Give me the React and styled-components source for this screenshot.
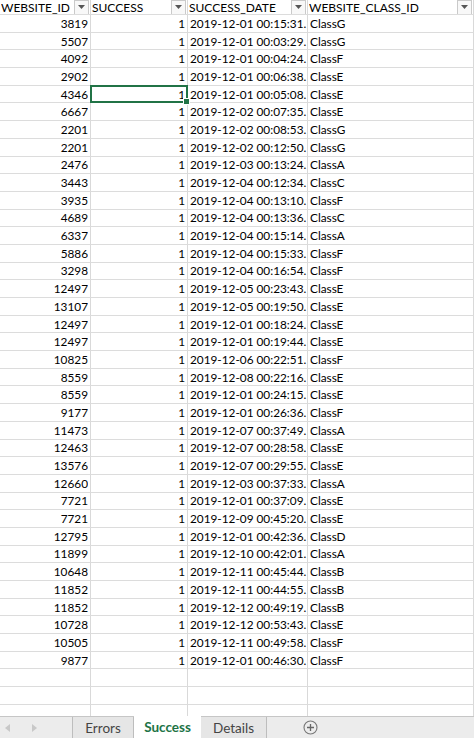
import styled, { createGlobalStyle } from "styled-components";

const GlobalStyle = createGlobalStyle`
  html, body {
    margin: 0;
    padding: 0;
    background: #ffffff;
    overflow: hidden;
  }
  body {
    font-family: Lato, "Liberation Sans", Arial, sans-serif;
  }
`;

const rows = [
  [3819, "2019-12-01 00:15:31", "ClassG"],
  [5507, "2019-12-01 00:03:29", "ClassG"],
  [4092, "2019-12-01 00:04:24", "ClassF"],
  [2902, "2019-12-01 00:06:38", "ClassE"],
  [4346, "2019-12-01 00:05:08", "ClassE"],
  [6667, "2019-12-02 00:07:35", "ClassE"],
  [2201, "2019-12-02 00:08:53", "ClassG"],
  [2201, "2019-12-02 00:12:50", "ClassG"],
  [2476, "2019-12-03 00:13:24", "ClassA"],
  [3443, "2019-12-04 00:12:34", "ClassC"],
  [3935, "2019-12-04 00:13:10", "ClassF"],
  [4689, "2019-12-04 00:13:36", "ClassC"],
  [6337, "2019-12-04 00:15:14", "ClassA"],
  [5886, "2019-12-04 00:15:33", "ClassF"],
  [3298, "2019-12-04 00:16:54", "ClassF"],
  [12497, "2019-12-05 00:23:43", "ClassE"],
  [13107, "2019-12-05 00:19:50", "ClassE"],
  [12497, "2019-12-01 00:18:24", "ClassE"],
  [12497, "2019-12-01 00:19:44", "ClassE"],
  [10825, "2019-12-06 00:22:51", "ClassF"],
  [8559, "2019-12-08 00:22:16", "ClassE"],
  [8559, "2019-12-01 00:24:15", "ClassE"],
  [9177, "2019-12-01 00:26:36", "ClassF"],
  [11473, "2019-12-07 00:37:49", "ClassA"],
  [12463, "2019-12-07 00:28:58", "ClassE"],
  [13576, "2019-12-07 00:29:55", "ClassE"],
  [12660, "2019-12-03 00:37:33", "ClassA"],
  [7721, "2019-12-01 00:37:09", "ClassE"],
  [7721, "2019-12-09 00:45:20", "ClassE"],
  [12795, "2019-12-01 00:42:36", "ClassD"],
  [11899, "2019-12-10 00:42:01", "ClassA"],
  [10648, "2019-12-11 00:45:44", "ClassB"],
  [11852, "2019-12-11 00:44:55", "ClassB"],
  [11852, "2019-12-12 00:49:19", "ClassB"],
  [10728, "2019-12-12 00:53:43", "ClassE"],
  [10505, "2019-12-11 00:49:58", "ClassF"],
  [9877, "2019-12-01 00:46:30", "ClassF"],
];

const headers = ["WEBSITE_ID", "SUCCESS", "SUCCESS_DATE", "WEBSITE_CLASS_ID"];

const Window = styled.div`
  height: 100vh;
  display: flex;
  flex-direction: column;
  color: #000;
  font-size: 11.8px;
`;

const Sheet = styled.div`
  flex: 1;
  overflow: hidden;
`;

const Row = styled.div`
  display: grid;
  grid-template-columns: 91px 97px 120px 1fr;
  height: ${(p) => p.$height}px;
`;

const Cell = styled.div`
  position: relative;
  display: flex;
  align-items: center;
  padding: ${(p) => (p.$right ? "0 2px 0 0" : "0 0 0 2px")};
  border-right: 1px solid #d9d9d9;
  border-bottom: 1px solid #dcdcdc;
  white-space: nowrap;
  overflow: ${(p) => (p.$selected ? "visible" : "hidden")};
  min-width: 0;
  box-sizing: border-box;

  ${(p) =>
    p.$selected &&
    `
    &::after {
      content: "";
      position: absolute;
      left: -1px;
      top: -1px;
      right: -1px;
      bottom: -1px;
      border: 2px solid #217346;
      z-index: 2;
    }
    &::before {
      content: "";
      position: absolute;
      right: -3px;
      bottom: -3px;
      width: 5px;
      height: 5px;
      background: #217346;
      border: 1px solid #ffffff;
      z-index: 3;
    }
  `}
`;

const CellText = styled.span`
  overflow: hidden;
  text-overflow: clip;
  flex: 1;
  text-align: ${(p) => (p.$right ? "right" : "left")};
`;

const HeaderCell = styled(Cell)`
  justify-content: space-between;
  padding: 0 1px 0 1px;
  font-size: 12px;
`;

const FilterButton = styled.div`
  flex: none;
  width: 13px;
  height: 13px;
  border: 1px solid #cacaca;
  background: #f8f8f8;
  display: flex;
  align-items: center;
  justify-content: center;
`;

const TabBar = styled.div`
  height: 22px;
  flex: none;
  display: flex;
  align-items: stretch;
  background: #ececec;
  border-top: 1px solid #c6c6c6;
  box-sizing: border-box;
`;

const Nav = styled.div`
  width: 73px;
  display: flex;
  align-items: center;
  gap: 20px;
  padding-left: 5px;
  box-sizing: border-box;
  border-right: 1px solid #bdbdbd;
`;

const Tab = styled.div`
  display: flex;
  align-items: center;
  justify-content: center;
  width: ${(p) => p.$width}px;
  font-size: 13.5px;
  box-sizing: border-box;
  color: ${(p) => (p.$active ? "#217346" : "#444")};
  font-weight: ${(p) => (p.$active ? 700 : 400)};
  background: ${(p) => (p.$active ? "#ffffff" : "#e6e6e6")};
  border-right: ${(p) => (p.$active ? "none" : "1px solid #bdbdbd")};
  margin-top: ${(p) => (p.$active ? "-1px" : "0")};
`;

const AddArea = styled.div`
  flex: 1;
  display: flex;
  align-items: center;
  padding-left: 36px;
`;

const Triangle = ({ dir }) => (
  <svg width="6" height="8" viewBox="0 0 6 8">
    <path d={dir === "left" ? "M5 0 L0 4 L5 8 Z" : "M1 0 L6 4 L1 8 Z"} fill="#c8c8c8" />
  </svg>
);

const DownArrow = () => (
  <svg width="7" height="4" viewBox="0 0 7 4">
    <path d="M0 0 H7 L3.5 4 Z" fill="#555" />
  </svg>
);

const PlusCircle = () => (
  <svg width="15" height="15" viewBox="0 0 15 15">
    <circle cx="7.5" cy="7.5" r="6.5" fill="none" stroke="#777" strokeWidth="1.1" />
    <path d="M7.5 4 V11 M4 7.5 H11" stroke="#666" strokeWidth="1.3" />
  </svg>
);

export default function App() {
  return (
    <Window>
      <GlobalStyle />
      <Sheet>
        <Row $height={15}>
          {headers.map((h) => (
            <HeaderCell key={h}>
              <CellText>{h}</CellText>
              <FilterButton>
                <DownArrow />
              </FilterButton>
            </HeaderCell>
          ))}
        </Row>
        {rows.map(([id, date, cls], i) => (
          <Row key={i} $height={17.7}>
            <Cell $right>
              <CellText $right>{id}</CellText>
            </Cell>
            <Cell $right $selected={i === 4}>
              <CellText $right>1</CellText>
            </Cell>
            <Cell>
              <CellText>{date}.</CellText>
            </Cell>
            <Cell>
              <CellText>{cls}</CellText>
            </Cell>
          </Row>
        ))}
        {[0, 1, 2].map((k) => (
          <Row key={"e" + k} $height={17.7}>
            <Cell />
            <Cell />
            <Cell />
            <Cell />
          </Row>
        ))}
      </Sheet>
      <TabBar>
        <Nav>
          <Triangle dir="left" />
          <Triangle dir="right" />
        </Nav>
        <Tab $width={61}>Errors</Tab>
        <Tab $width={67} $active>
          Success
        </Tab>
        <Tab $width={66}>Details</Tab>
        <AddArea>
          <PlusCircle />
        </AddArea>
      </TabBar>
    </Window>
  );
}
